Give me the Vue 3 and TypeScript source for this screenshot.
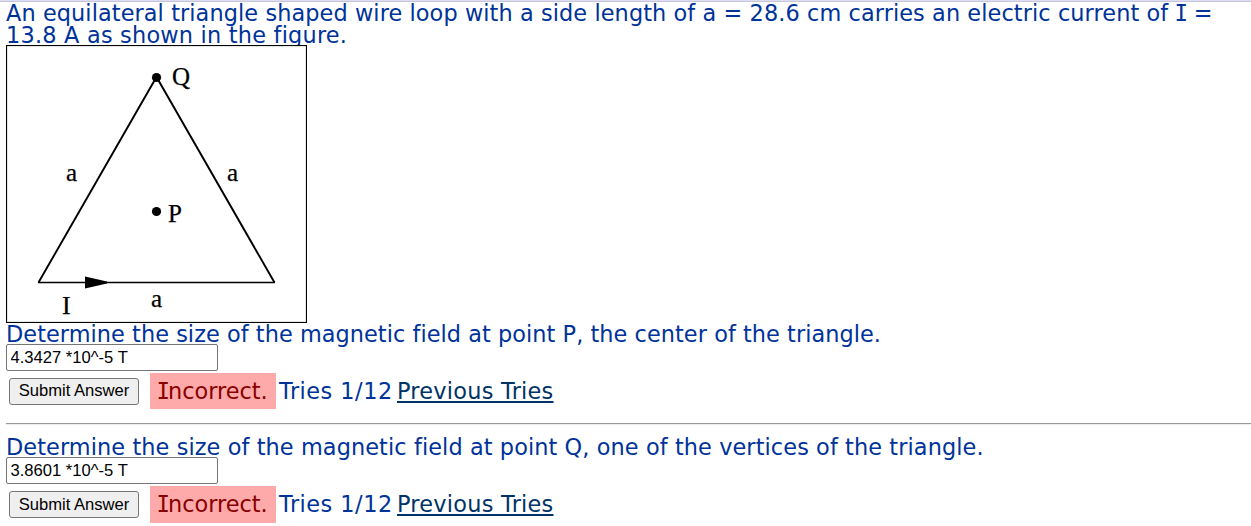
<script setup lang="ts">
interface Part {
  id: string
  question: string
  answer: string
}

const parts: Part[] = [
  { id: 'p', question: 'Determine the size of the magnetic field at point P, the center of the triangle.', answer: '4.3427 *10^-5 T' },
  { id: 'q', question: 'Determine the size of the magnetic field at point Q, one of the vertices of the triangle.', answer: '3.8601 *10^-5 T' },
]
</script>

<template>
  <main class="problem">
    <p class="line first">An equilateral triangle shaped wire loop with a side length of a = 28.6 cm carries an electric current of <span class="current">I</span> =</p>
    <p class="line second">13.8 A as shown in the figure.</p>
    <svg class="figure" width="301" height="278" viewBox="0 0 301 278">
      <rect x="0.5" y="0.5" width="300" height="277" fill="#fff" stroke="#000" stroke-width="1.2" />
      <path d="M32.5 237.5L150.5 32L268.5 237.5" fill="none" stroke="#000" stroke-width="1.9" />
      <path d="M32 237.5H269" stroke="#000" stroke-width="1.3" />
      <path d="M79 231.5V243.5L101 238.5V236.5Z" />
      <circle cx="150.5" cy="32.5" r="4.6" />
      <circle cx="150.5" cy="166.5" r="4.6" />
      <text x="166" y="40" font-size="25">Q</text>
      <text x="162" y="177" font-size="25">P</text>
      <text x="56" y="269" font-size="26">I</text>
      <text x="60" y="135.5" font-size="25">a</text>
      <text x="221" y="135.5" font-size="25">a</text>
      <text x="145" y="262" font-size="25">a</text>
    </svg>
    <section v-for="part in parts" :key="part.id" :class="['part', part.id]">
      <p class="line question">{{ part.question }}</p>
      <input class="answer" type="text" :value="part.answer">
      <div class="status">
        <button class="submit" type="button">Submit Answer</button>
        <span class="verdict">Incorrect.</span>
        <span class="tries">Tries 1/12</span>
        <a class="previous" href="#">Previous Tries</a>
      </div>
    </section>
  </main>
</template>

<style>
html, body { margin: 0; background: #fff; overflow: hidden; }
</style>

<style scoped>
.problem {
  box-sizing: border-box;
  height: 526px;
  padding-left: 6px;
  border-top: 1px solid #dcdcf8;
  box-shadow: inset 0 1px #c8c8d4;
  padding-top: 1px;
  overflow: hidden;
  color: #003399;
  font: 22.4px/22px "DejaVu Sans", sans-serif;
}
.line { margin: 0; height: 22px; white-space: nowrap; }
.first { letter-spacing: 0.09px; }
.second { letter-spacing: 0.22px; }
.p .question { letter-spacing: 0.055px; }
.q .question { letter-spacing: 0.095px; }
.current { margin: 0 -1.5px 0 -1px; font-family: "DejaVu Sans Mono", monospace; }
.figure { display: block; position: relative; margin-top: -1px; }
.figure text { font-family: "Liberation Serif", serif; fill: #000; stroke: #000; stroke-width: 0.25; }
.answer {
  display: block;
  box-sizing: border-box;
  width: 212px;
  height: 27px;
  margin: -1px 0 0;
  padding: 0 3.5px;
  border: 1px solid #767676;
  border-radius: 2px;
  background: #fff;
  color: #000;
  font: 16.6px "Liberation Sans", sans-serif;
  position: relative;
}
.status { display: flex; height: 36px; margin-top: 2px; line-height: 36px; white-space: nowrap; }
.submit {
  box-sizing: border-box;
  width: 130px;
  height: 27px;
  margin: 5px 11px 0 3px;
  padding: 0 0 2px;
  border: 1px solid #767676;
  border-radius: 3px;
  background: #efefef;
  color: #000;
  font: 16.6px "Liberation Sans", sans-serif;
}
.q .submit { padding-bottom: 0; }
.verdict { display: block; box-sizing: border-box; width: 126px; padding-left: 8px; background: #ffaaaa; color: #880000; }
.verdict::first-letter { margin-left: -1.5px; margin-right: -2px; font-family: "DejaVu Sans Mono", monospace; }
.tries { width: 114px; margin-left: 3px; letter-spacing: 0.5px; }
.previous { margin-left: 4px; color: #003366; letter-spacing: 0.25px; text-decoration-thickness: 2px; text-underline-offset: 2px; }
.q {
  margin-top: 14px;
  padding-top: 12px;
  border-top: 1px solid #999;
  box-shadow: inset 0 1px #eee;
}
.q .status { height: 37px; }
</style>
